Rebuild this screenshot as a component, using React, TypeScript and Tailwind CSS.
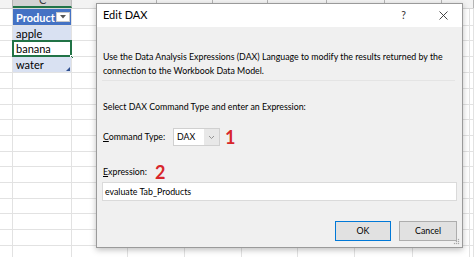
import React from "react";

const colWidths = [13, 59, 56, 57, 57, 56, 57, 58, 57, 4];
const rowHeights = [17, 15, 16, 16, 16, 16, 15, 16, 16, 15, 16, 16, 15, 16, 16, 16];
const stripWidths = [13, 59, 85, 56, 55, 59, 58, 57, 32];

function Chevron() {
  return (
    <svg width="7" height="5" viewBox="0 0 7 5">
      <path d="M1 1 L3.5 3.5 L6 1" fill="none" stroke="#8a8a8a" strokeWidth="0.9" />
    </svg>
  );
}

function Cell({ row, col }: { row: number; col: number }) {
  const w = colWidths[col];
  const base = "shrink-0 border-r border-b border-[#e2e2e2] relative";
  if (col === 1 && row === 0) {
    return (
      <div style={{ width: w }} className={`${base} bg-[#4472c4] border-[#4472c4] flex items-center pl-[3px] pr-[1px]`}>
        <span className="text-white font-bold text-[11px] leading-none flex-1">Product</span>
        <span className="w-[14px] h-[10px] bg-white border border-[#c8c8c8] flex items-center justify-center">
          <svg width="6" height="4" viewBox="0 0 6 4">
            <path d="M0 0 L6 0 L3 3.5 Z" fill="#555" />
          </svg>
        </span>
      </div>
    );
  }
  if (col === 1 && row >= 1 && row <= 3) {
    const labels = ["apple", "banana", "water"];
    const banded = row !== 2;
    return (
      <div
        style={{ width: w }}
        className={`${base} flex items-center pl-[3px] ${banded ? "bg-[#d9e1f2] border-[#d9e1f2]" : "bg-white"}`}
      >
        <span className="text-[11px] leading-none text-black">{labels[row - 1]}</span>
        {row === 2 && (
          <>
            <div className="absolute -left-[1px] -top-[1px] right-[-1px] bottom-[-1px] border-2 border-[#217346]" />
            <div className="absolute right-[-3px] bottom-[-3px] w-[4px] h-[4px] bg-[#217346] border border-white" />
          </>
        )}
        {row === 3 && (
          <svg className="absolute right-[1px] bottom-[1px]" width="4" height="4" viewBox="0 0 4 4">
            <path d="M4 0 L4 4 L0 4 Z" fill="#2f4f8f" />
          </svg>
        )}
      </div>
    );
  }
  return <div style={{ width: w }} className={base} />;
}

function Sheet() {
  return (
    <div className="flex flex-col">
      <div className="flex h-[9px] bg-[#f3f3f3] border-b border-[#d6d6d6]">
        {stripWidths.map((w, i) => (
          <div
            key={i}
            style={{ width: w }}
            className={`shrink-0 h-full border-r overflow-hidden relative ${
              i === 1 ? "bg-[#d2d2d2] border-[#bdbdbd] border-b-2 border-b-[#217346]" : "border-[#b4b4b4]"
            }`}
          >
            {i === 1 && (
              <span className="absolute left-[26px] -top-[6px] text-[11px] leading-[12px] text-[#3a3a3a]">C</span>
            )}
          </div>
        ))}
      </div>
      {rowHeights.map((h, r) => (
        <div key={r} className="flex" style={{ height: h }}>
          {colWidths.map((_, c) => (
            <Cell key={c} row={r} col={c} />
          ))}
        </div>
      ))}
    </div>
  );
}

function Dialog() {
  return (
    <div
      className="absolute left-[96px] top-[3px] w-[367px] h-[245px] border border-[#9a9a9a] bg-[#f0f0f0] shadow-[0_2px_6px_rgba(0,0,0,0.25)] flex flex-col text-black"
      style={{ fontFamily: "Lato, 'Noto Sans', sans-serif" }}
    >
      {/* title bar */}
      <div className="h-[23px] bg-white flex items-center pl-[6px] pr-[14px] shrink-0">
        <span className="text-[11px] flex-1">Edit DAX</span>
        <span className="text-[10.5px] mr-[33px] text-[#333]">?</span>
        <svg width="9" height="9" viewBox="0 0 9 9">
          <path d="M0.5 0.5 L8.5 8.5 M8.5 0.5 L0.5 8.5" stroke="#333" strokeWidth="0.9" />
        </svg>
      </div>

      <div className="flex flex-col px-[5px] text-[8.8px]">
        <p className="mt-[23px] leading-[13.5px] pl-[1px]">
          Use the Data Analysis Expressions (DAX) Language to modify the results returned by the
          <br />
          connection to the Workbook Data Model.
        </p>
        <div className="mt-[3px] h-px bg-[#e4e4e4] mr-[2px]" />

        <p className="mt-[20px] leading-[12px] pl-[1px]">Select DAX Command Type and enter an Expression:</p>

        <div className="mt-[15px] flex items-center h-[18px] pl-[1px]">
          <span className="w-[70px]">
            <span className="underline underline-offset-1">C</span>ommand Type:
          </span>
          <div className="w-[47px] h-[18px] bg-white border border-[#d0d0d0] flex items-center">
            <span className="flex-1 pl-[3px]">DAX</span>
            <div className="w-[15px] h-full bg-[#e8e8e8] flex items-center justify-center">
              <Chevron />
            </div>
          </div>
          <span className="ml-[5px] text-[#d8262b] font-bold text-[18px] leading-none">1</span>
        </div>

        <div className="mt-[19px] flex items-center h-[14px] pl-[1px]">
          <span>
            <span className="underline underline-offset-1">E</span>xpression:
          </span>
          <span className="ml-[8px] text-[#d8262b] font-bold text-[18px] leading-none">2</span>
        </div>

        <div className="mt-[3px] h-[19px] bg-white border border-[#dadada] flex items-center pl-[2px]">
          evaluate Tab_Products
        </div>

        <div className="mt-[20px] flex justify-end gap-[8px]">
          <button className="w-[56px] h-[20px] bg-[#e1e1e1] border-[1.5px] border-[#0078d7] text-[8.8px]">OK</button>
          <button className="w-[58px] h-[20px] bg-[#e1e1e1] border border-[#adadad] text-[8.8px]">Cancel</button>
        </div>
      </div>

      <svg className="absolute right-[2px] bottom-[2px]" width="7" height="7" viewBox="0 0 7 7">
        {[
          [5.5, 1.5],
          [3.5, 3.5],
          [5.5, 3.5],
          [1.5, 5.5],
          [3.5, 5.5],
          [5.5, 5.5],
        ].map(([x, y], i) => (
          <rect key={i} x={x - 0.6} y={y - 0.6} width="1.2" height="1.2" fill="#a8a8a8" />
        ))}
      </svg>
    </div>
  );
}

export default function App() {
  return (
    <div
      className="relative w-[474px] h-[257px] overflow-hidden bg-white"
      style={{ fontFamily: "Lato, 'Noto Sans', sans-serif" }}
    >
      <Sheet />
      <Dialog />
    </div>
  );
}
